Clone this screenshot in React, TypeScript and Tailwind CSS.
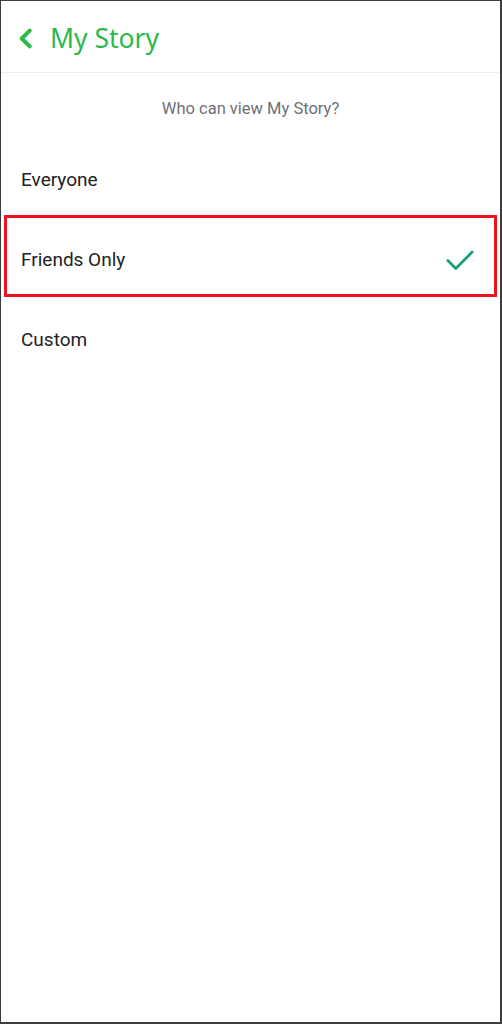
const options = [
  { label: 'Everyone', selected: false },
  { label: 'Friends Only', selected: true },
  { label: 'Custom', selected: false },
]

function Chevron() {
  return (
    <svg viewBox="0 0 16 22" className="w-[15px] h-[21px]" aria-hidden>
      <path d="M12.5 2.5 L4 11 L12.5 19.5" fill="none" stroke="#2db84c" strokeWidth="4.2" strokeLinecap="round" strokeLinejoin="round" />
    </svg>
  )
}

function Check() {
  return (
    <svg viewBox="0 0 30 22" className="w-[28px] h-[21px]" aria-hidden>
      <path d="M2 11 L10.5 19.5 L28 2" fill="none" stroke="#1f9e7c" strokeWidth="3" strokeLinecap="round" strokeLinejoin="round" />
    </svg>
  )
}

export default function App() {
  return (
    <div className="w-[502px] h-[1024px] bg-white border-t border-l border-r-2 border-b-2 border-[#3d3d3d] flex flex-col" style={{ fontFamily: 'Roboto, "Noto Sans", sans-serif' }}>
      {/* Header */}
      <div className="h-[72px] pt-[3px] flex items-center pl-[17px] gap-[17px] border-b border-[#eeeeee]">
        <Chevron />
        <span className="text-[26.5px] leading-none text-[#2db84c]" style={{ fontFamily: '"Noto Sans", sans-serif' }}>
          My Story
        </span>
      </div>

      {/* Prompt */}
      <div className="h-[67px] pt-[6px] flex items-center justify-center">
        <span className="text-[16.5px] text-[#6e7077]">Who can view My Story?</span>
      </div>

      {/* Options */}
      <div className="flex flex-col">
        {options.map((o) => (
          <div key={o.label} className="relative h-20 flex items-center justify-between pl-[20px] pr-[26px]">
            <span className="text-[19px] text-[#222222]">{o.label}</span>
            {o.selected && <Check />}
            {o.selected && (
              <div className="absolute left-[3px] right-[3px] top-[-5px] bottom-[3px] border-[3px] border-[#e8131c]" />
            )}
          </div>
        ))}
      </div>
    </div>
  )
}
